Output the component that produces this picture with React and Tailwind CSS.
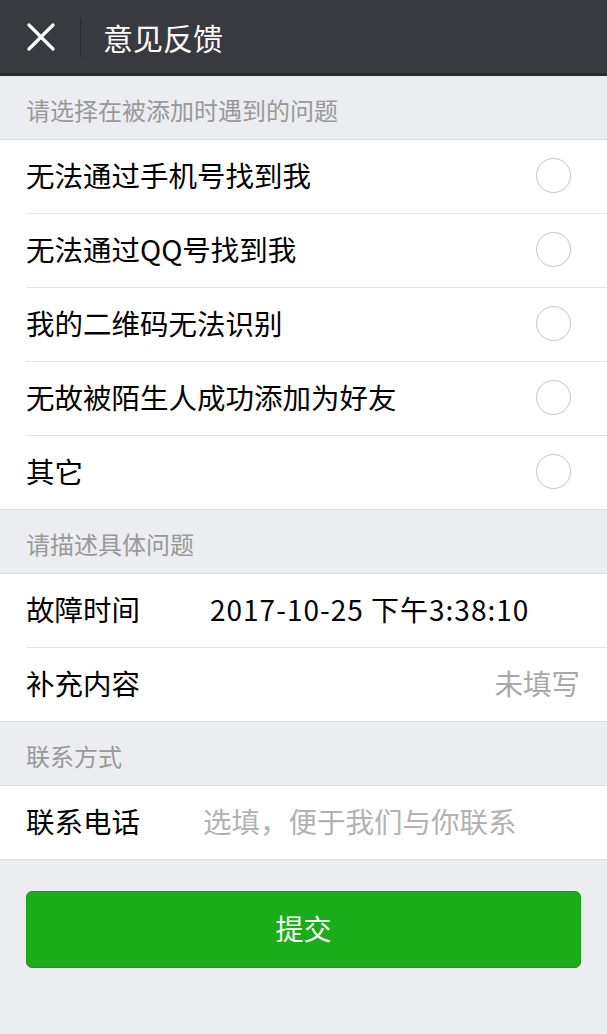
import { useState } from "react";

const FONT = { fontFamily: '"Noto Sans CJK SC", "Noto Sans", sans-serif' };

const problems = [
  "无法通过手机号找到我",
  "无法通过QQ号找到我",
  "我的二维码无法识别",
  "无故被陌生人成功添加为好友",
  "其它",
];

function SectionTitle({ children }) {
  return (
    <div className="h-[63px] pl-[26px] pt-[4px] flex items-center text-[24px] text-[#999999] bg-[#ebedf0]">
      {children}
    </div>
  );
}

function Row({ children, last, pr = "pr-[27px]" }) {
  return (
    <div className={"ml-[26px] pb-[3px] flex items-center " + pr + " " + (last ? "h-[73px]" : "h-[74px] border-b border-[#e3e3e3]")}>
      {children}
    </div>
  );
}

export default function App() {
  const [selected, setSelected] = useState(null);

  return (
    <div className="w-[607px] min-h-[1034px] bg-[#ebedf0]" style={FONT}>
      {/* header */}
      <div className="h-[76px] bg-[#393a3f] border-b-[3px] border-[#2b2c30] flex items-center">
        <div className="w-[80px] flex justify-center pl-[2px]">
          <svg width="28" height="28" viewBox="0 0 28 28">
            <path d="M2 2 L26 26 M26 2 L2 26" stroke="#ffffff" strokeWidth="3.2" strokeLinecap="round" />
          </svg>
        </div>
        <div className="w-[1px] h-[40px] bg-[#2a2b2f]" />
        <div className="pl-[22px] text-[30px] text-white leading-none">意见反馈</div>
      </div>

      <SectionTitle>请选择在被添加时遇到的问题</SectionTitle>
      <div className="bg-white border-y border-[#dcdcdc]">
        {problems.map((p, i) => (
          <Row key={p} last={i === problems.length - 1} pr="pr-[36px]">
            <span className="flex-1 text-[28.5px] text-black">{p}</span>
            <button
              onClick={() => setSelected(i)}
              className={
                "w-[35px] h-[35px] rounded-full border-[1.5px] " +
                (selected === i ? "border-[#1aad19] bg-[#1aad19]" : "border-[#c6c6c6]")
              }
            />
          </Row>
        ))}
      </div>

      <SectionTitle>请描述具体问题</SectionTitle>
      <div className="bg-white border-y border-[#dcdcdc]">
        <Row>
          <span className="w-[184px] text-[28.5px] text-black">故障时间</span>
          <span className="text-[28px] tracking-[1px] text-black">2017-10-25 下午3:38:10</span>
        </Row>
        <Row last>
          <span className="flex-1 text-[28.5px] text-black">补充内容</span>
          <span className="text-[28.5px] text-[#a8a8a8]">未填写</span>
        </Row>
      </div>

      <SectionTitle>联系方式</SectionTitle>
      <div className="bg-white border-y border-[#dcdcdc]">
        <Row last>
          <span className="w-[177px] text-[28.5px] text-black">联系电话</span>
          <span className="text-[28.5px] text-[#b2b2b2]">选填，便于我们与你联系</span>
        </Row>
      </div>

      <div className="px-[26px] pt-[31px]">
        <button className="w-full h-[77px] rounded-[6px] bg-[#1aad19] border border-[#179b16] text-white text-[28px] pb-[3px]">
          提交
        </button>
      </div>
    </div>
  );
}
